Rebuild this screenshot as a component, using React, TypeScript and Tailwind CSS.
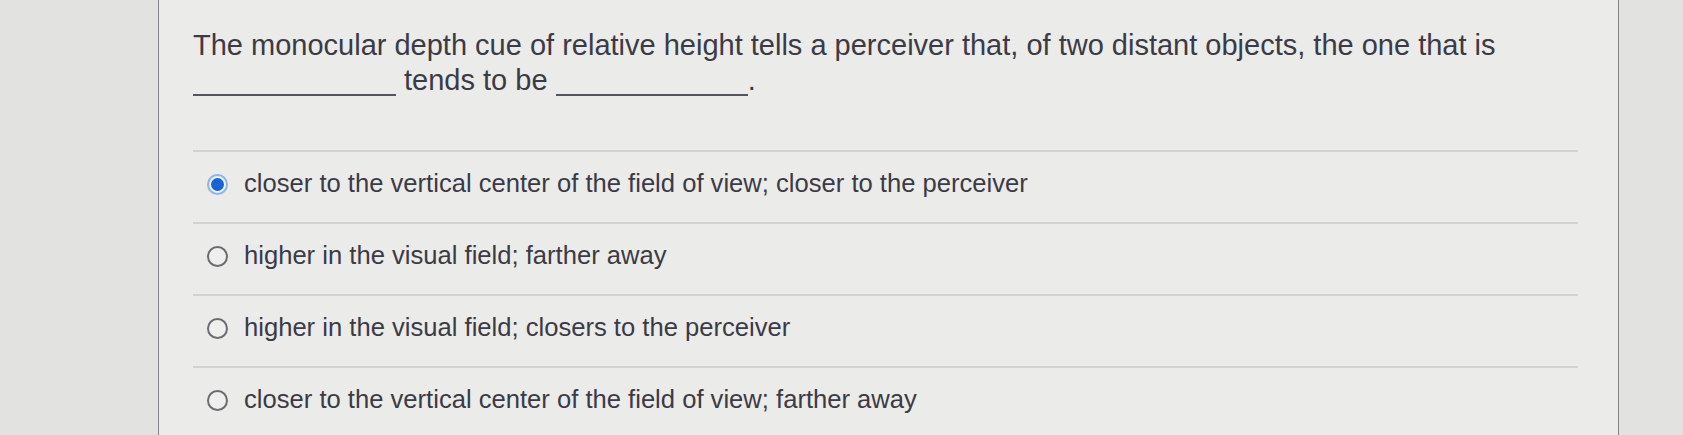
import React from 'react';

const options = [
  'closer to the vertical center of the field of view; closer to the perceiver',
  'higher in the visual field; farther away',
  'higher in the visual field; closers to the perceiver',
  'closer to the vertical center of the field of view; farther away',
];

const Radio: React.FC<{ checked?: boolean }> = ({ checked }) =>
  checked ? (
    <span className="flex h-[21px] w-[21px] shrink-0 items-center justify-center rounded-full border-2 border-[#93b3e2] bg-[#eef3fb]">
      <span className="h-[13px] w-[13px] rounded-full bg-[#1565d8]" />
    </span>
  ) : (
    <span className="h-[21px] w-[21px] shrink-0 rounded-full border-2 border-[#6c6b72] bg-[#efefed]" />
  );

export default function App() {
  return (
    <div
      className="flex h-[435px] w-[1683px] overflow-hidden bg-[#e2e2e0] text-[#3b3a46]"
      style={{ fontFamily: '"Liberation Sans", Arial, sans-serif' }}
    >
      <div className="w-[158px] shrink-0" />
      <div className="flex w-[1461px] shrink-0 flex-col border-x border-[#84848a] bg-[#ebebe9] pl-[34px] pr-[40px] pt-[28px]">
        <p className="text-[29px] leading-[35px]">
          The monocular depth cue of relative height tells a perceiver that, of two distant objects, the one that is
          <br />
          <span className="inline-block w-[203px] translate-y-[6px] border-b-2 border-[#555462]" /> tends to be{' '}
          <span className="inline-block w-[192px] translate-y-[6px] border-b-2 border-[#555462]" />.
        </p>

        <div className="mt-[52px] flex flex-col">
          {options.map((o, i) => (
            <div
              key={i}
              className="flex h-[72px] items-center gap-[16px] border-t-2 border-[#d2d2d0] pb-[6px] pl-[14px]"
            >
              <Radio checked={i === 0} />
              <span className="text-[25.6px] leading-none">{o}</span>
            </div>
          ))}
        </div>
      </div>
      <div className="flex-1" />
    </div>
  );
}
